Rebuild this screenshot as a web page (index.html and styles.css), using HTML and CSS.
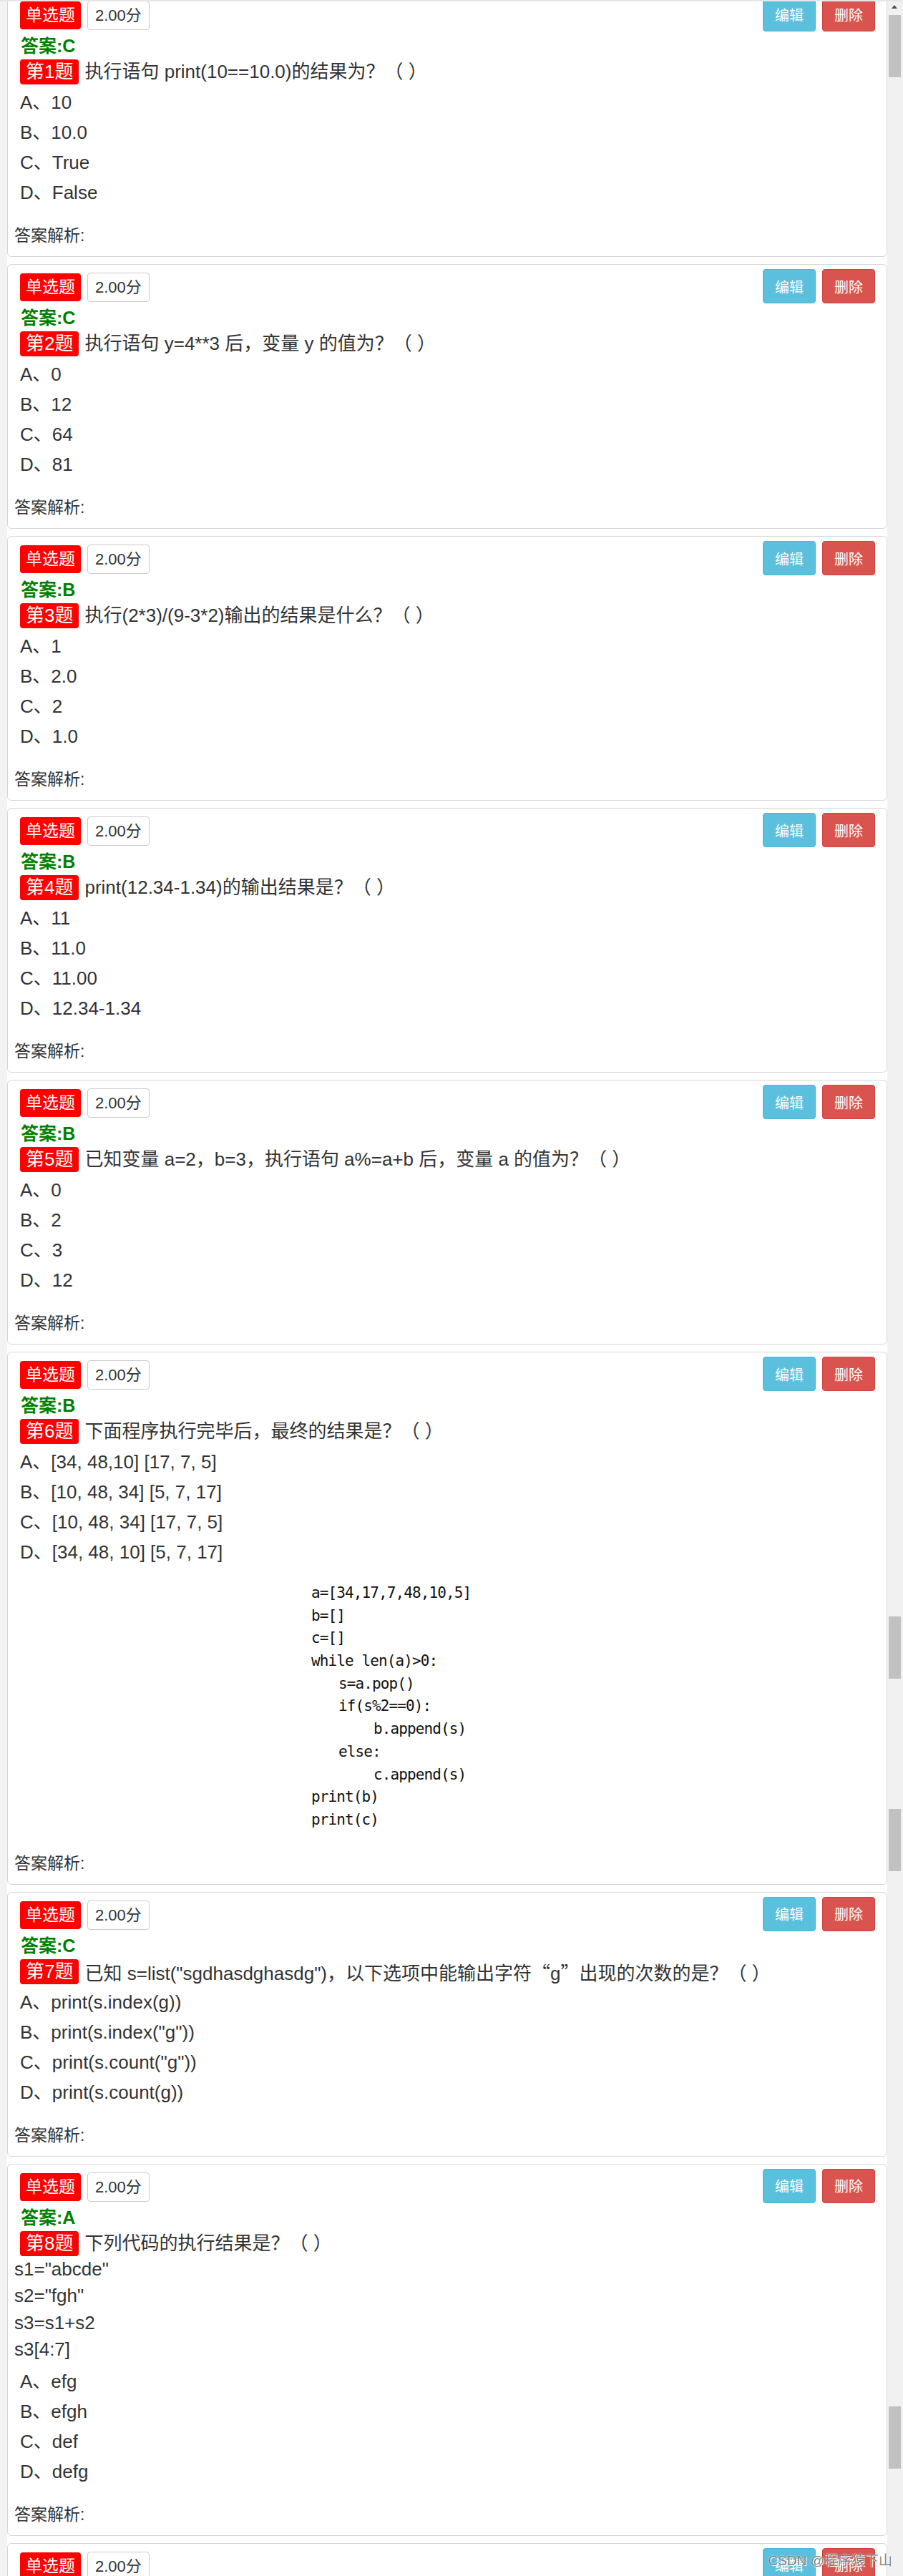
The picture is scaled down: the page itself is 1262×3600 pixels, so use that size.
FILE: index.html
```html
<!DOCTYPE html>
<html lang="zh-CN">
<head>
<meta charset="utf-8">
<title>题目列表</title>
<link rel="stylesheet" href="styles.css">
</head>
<body>
<div class="page">
  <div class="strip"></div>
  <main class="main">

    <div class="card first">
      <div class="head">
        <span class="type">单选题</span><span class="score">2.00分</span>
        <div class="ops"><button class="btn edit">编辑</button><button class="btn del">删除</button></div>
      </div>
      <div class="answer">答案:C</div>
      <div class="question"><span class="qno">第1题</span>执行语句 print(10==10.0)的结果为？（ ）</div>
      <div class="options">
        <div class="opt">A、10</div>
        <div class="opt">B、10.0</div>
        <div class="opt">C、True</div>
        <div class="opt">D、False</div>
      </div>
      <div class="analysis">答案解析:</div>
    </div>

    <div class="card">
      <div class="head">
        <span class="type">单选题</span><span class="score">2.00分</span>
        <div class="ops"><button class="btn edit">编辑</button><button class="btn del">删除</button></div>
      </div>
      <div class="answer">答案:C</div>
      <div class="question"><span class="qno">第2题</span>执行语句 y=4**3 后，变量 y 的值为？（ ）</div>
      <div class="options">
        <div class="opt">A、0</div>
        <div class="opt">B、12</div>
        <div class="opt">C、64</div>
        <div class="opt">D、81</div>
      </div>
      <div class="analysis">答案解析:</div>
    </div>

    <div class="card">
      <div class="head">
        <span class="type">单选题</span><span class="score">2.00分</span>
        <div class="ops"><button class="btn edit">编辑</button><button class="btn del">删除</button></div>
      </div>
      <div class="answer">答案:B</div>
      <div class="question"><span class="qno">第3题</span>执行(2*3)/(9-3*2)输出的结果是什么？（ ）</div>
      <div class="options">
        <div class="opt">A、1</div>
        <div class="opt">B、2.0</div>
        <div class="opt">C、2</div>
        <div class="opt">D、1.0</div>
      </div>
      <div class="analysis">答案解析:</div>
    </div>

    <div class="card">
      <div class="head">
        <span class="type">单选题</span><span class="score">2.00分</span>
        <div class="ops"><button class="btn edit">编辑</button><button class="btn del">删除</button></div>
      </div>
      <div class="answer">答案:B</div>
      <div class="question"><span class="qno">第4题</span>print(12.34-1.34)的输出结果是？（ ）</div>
      <div class="options">
        <div class="opt">A、11</div>
        <div class="opt">B、11.0</div>
        <div class="opt">C、11.00</div>
        <div class="opt">D、12.34-1.34</div>
      </div>
      <div class="analysis">答案解析:</div>
    </div>

    <div class="card">
      <div class="head">
        <span class="type">单选题</span><span class="score">2.00分</span>
        <div class="ops"><button class="btn edit">编辑</button><button class="btn del">删除</button></div>
      </div>
      <div class="answer">答案:B</div>
      <div class="question"><span class="qno">第5题</span>已知变量 a=2，b=3，执行语句 a%=a+b 后，变量 a 的值为？（ ）</div>
      <div class="options">
        <div class="opt">A、0</div>
        <div class="opt">B、2</div>
        <div class="opt">C、3</div>
        <div class="opt">D、12</div>
      </div>
      <div class="analysis">答案解析:</div>
    </div>

    <div class="card">
      <div class="head">
        <span class="type">单选题</span><span class="score">2.00分</span>
        <div class="ops"><button class="btn edit">编辑</button><button class="btn del">删除</button></div>
      </div>
      <div class="answer">答案:B</div>
      <div class="question"><span class="qno">第6题</span>下面程序执行完毕后，最终的结果是？（ ）</div>
      <div class="options">
        <div class="opt">A、[34, 48,10] [17, 7, 5]</div>
        <div class="opt">B、[10, 48, 34] [5, 7, 17]</div>
        <div class="opt">C、[10, 48, 34] [17, 7, 5]</div>
        <div class="opt">D、[34, 48, 10] [5, 7, 17]</div>
      </div>
      <div class="codeimg">
        <div class="code">a=[34,17,7,48,10,5]</div>
        <div class="code">b=[]</div>
        <div class="code">c=[]</div>
        <div class="code">while len(a)&gt;0:</div>
        <div class="code i1">s=a.pop()</div>
        <div class="code i1">if(s%2==0):</div>
        <div class="code i2">b.append(s)</div>
        <div class="code i1">else:</div>
        <div class="code i2">c.append(s)</div>
        <div class="code">print(b)</div>
        <div class="code">print(c)</div>
      </div>
      <div class="analysis after-code">答案解析:</div>
    </div>

    <div class="card">
      <div class="head">
        <span class="type">单选题</span><span class="score">2.00分</span>
        <div class="ops"><button class="btn edit">编辑</button><button class="btn del">删除</button></div>
      </div>
      <div class="answer">答案:C</div>
      <div class="question"><span class="qno">第7题</span>已知 s=list("sgdhasdghasdg")，以下选项中能输出字符<span class="cjk">“</span>g<span class="cjk">”</span>出现的次数的是？（ ）</div>
      <div class="options">
        <div class="opt">A、print(s.index(g))</div>
        <div class="opt">B、print(s.index("g"))</div>
        <div class="opt">C、print(s.count("g"))</div>
        <div class="opt">D、print(s.count(g))</div>
      </div>
      <div class="analysis">答案解析:</div>
    </div>

    <div class="card">
      <div class="head">
        <span class="type">单选题</span><span class="score">2.00分</span>
        <div class="ops"><button class="btn edit">编辑</button><button class="btn del">删除</button></div>
      </div>
      <div class="answer">答案:A</div>
      <div class="question"><span class="qno">第8题</span>下列代码的执行结果是？（ ）</div>
      <div class="codelines">
        <div class="cl">s1="abcde"</div>
        <div class="cl">s2="fgh"</div>
        <div class="cl">s3=s1+s2</div>
        <div class="cl">s3[4:7]</div>
      </div>
      <div class="options">
        <div class="opt">A、efg</div>
        <div class="opt">B、efgh</div>
        <div class="opt">C、def</div>
        <div class="opt">D、defg</div>
      </div>
      <div class="analysis">答案解析:</div>
    </div>

    <div class="card">
      <div class="head">
        <span class="type">单选题</span><span class="score">2.00分</span>
        <div class="ops"><button class="btn edit">编辑</button><button class="btn del">删除</button></div>
      </div>
    </div>

  </main>
  <div class="scroll">
    <div class="arrow"></div>
    <div class="thumb t1"></div>
    <div class="thumb t2"></div>
    <div class="thumb t3"></div>
    <div class="thumb t4"></div>
  </div>
  <div class="topline"></div>
  <div class="watermark">CSDN @程序猿下山</div>
</div>
</body>
</html>
```

FILE: styles.css
```css
html, body {
  margin: 0;
  padding: 0;
  height: 3600px;
  overflow: hidden;
  background: #ffffff;
}

body {
  font-family: "Liberation Sans", "Noto Sans CJK SC", sans-serif;
  color: #333333;
}

.page {
  position: relative;
  display: flex;
  width: 1262px;
  height: 3600px;
  overflow: hidden;
}

.strip {
  width: 10px;
  flex: 0 0 10px;
  background: #f3f3f3;
}

.main {
  width: 1230px;
  flex: 0 0 1230px;
  background: #ffffff;
}

.scroll {
  position: relative;
  flex: 0 0 22px;
  width: 22px;
  background: #f1f1f1;
}

.arrow {
  position: absolute;
  top: 7px;
  left: 6px;
  width: 0;
  height: 0;
  border-left: 4px solid transparent;
  border-right: 4px solid transparent;
  border-bottom: 5px solid #505050;
}

.thumb {
  position: absolute;
  left: 2px;
  width: 17px;
  background: #c1c1c1;
}
.t1 { top: 21px; height: 87px; }
.t2 { top: 2259px; height: 87px; }
.t3 { top: 2528px; height: 87px; }
.t4 { top: 3363px; height: 87px; }

.topline {
  position: absolute;
  top: 0;
  left: 0;
  width: 1262px;
  height: 2px;
  background: #e6e6e6;
}

.card {
  border: 1px solid #d6d6d6;
  border-radius: 6px;
  padding: 11px 9px 12px 9px;
  margin-bottom: 10px;
  background: #ffffff;
}

.card.first {
  margin-top: -11px;
}

.head {
  display: flex;
  align-items: center;
  height: 41px;
  margin-left: 8px;
}

.type {
  display: inline-block;
  height: 39px;
  line-height: 39px;
  padding: 0 8px;
  background: #ff0000;
  color: #ffffff;
  font-size: 23px;
  border-radius: 4px;
}

.score {
  display: inline-block;
  box-sizing: border-box;
  height: 41px;
  line-height: 39px;
  padding: 0 10px;
  margin-left: 9px;
  border: 1px solid #cccccc;
  border-radius: 4px;
  font-size: 22px;
  color: #333333;
}

.ops {
  display: flex;
  gap: 9px;
  margin-left: auto;
  margin-right: 7px;
  align-self: flex-start;
  margin-top: -5px;
}

.btn {
  box-sizing: border-box;
  width: 74px;
  height: 48px;
  padding: 0;
  border-radius: 4px;
  font-family: "Noto Sans CJK SC", "Liberation Sans", sans-serif;
  font-size: 20px;
  color: #ffffff;
  cursor: pointer;
}
.btn.edit {
  background: #5bc0de;
  border: 1px solid #46b8da;
}
.btn.del {
  background: #d9534f;
  border: 1px solid #d43f3a;
}

.answer {
  margin: 3px 0 0 9px;
  height: 38px;
  line-height: 38px;
  font-size: 25px;
  font-weight: bold;
  color: #008000;
}

.question {
  margin-left: 8px;
  height: 35px;
  line-height: 35px;
  font-size: 26px;
  white-space: nowrap;
}

.cjk {
  font-family: "Noto Sans CJK SC", sans-serif;
}

.qno {
  display: inline-block;
  height: 35px;
  line-height: 35px;
  padding: 0 8px;
  margin-right: 8px;
  background: #ff0000;
  color: #ffffff;
  border-radius: 4px;
  vertical-align: top;
}

.options {
  margin: 4px 0 0 8px;
}

.opt {
  height: 42px;
  line-height: 42px;
  font-size: 26px;
  white-space: nowrap;
}

.cl {
  height: 37.5px;
  line-height: 37.5px;
  font-size: 26px;
}

.codeimg {
  margin: 21px 0 0 415px;
  font-family: "DejaVu Sans Mono", "Liberation Mono", monospace;
  font-size: 21px;
  letter-spacing: -0.9px;
  color: #111111;
}

.code {
  height: 31.7px;
  line-height: 31.7px;
  white-space: pre;
}

.code.i1 {
  padding-left: 38px;
}

.code.i2 {
  padding-left: 87px;
}

.analysis {
  margin-top: 22px;
  height: 34px;
  line-height: 34px;
  font-size: 23px;
  color: #333333;
}

.analysis.after-code {
  margin-top: 27px;
}

.watermark {
  position: absolute;
  right: 15px;
  top: 3566px;
  font-size: 19px;
  line-height: 26px;
  color: rgba(90, 90, 90, 0.75);
  text-shadow: 0 0 2px #ffffff, 1px 1px 0 #ffffff;
  white-space: nowrap;
}
```
